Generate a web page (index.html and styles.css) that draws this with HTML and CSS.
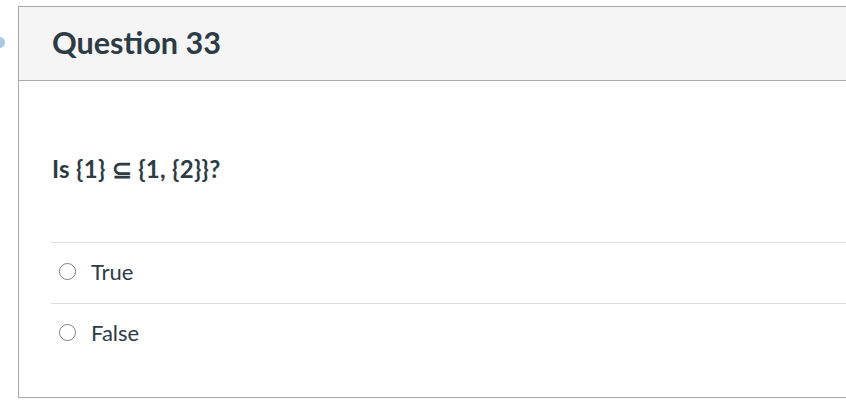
FILE: index.html
```html
<!DOCTYPE html>
<html>
<head>
<meta charset="utf-8">
<link rel="stylesheet" href="styles.css">
</head>
<body>
<div class="page">
  <span class="flag"></span>
  <div class="card">
    <div class="header">
      <h2 class="title">Question 33</h2>
    </div>
    <div class="body">
      <p class="question">Is {1} ⊆ {1, {2}}?</p>
      <div class="answers">
        <label class="answer"><span class="radio"></span><span class="label">True</span></label>
        <label class="answer"><span class="radio"></span><span class="label">False</span></label>
      </div>
    </div>
  </div>
</div>
</body>
</html>
```
FILE: styles.css
```css
html, body {
  margin: 0;
  padding: 0;
  background: #fff;
}
body {
  font-family: Lato, "Liberation Sans", sans-serif;
  color: #2d3b45;
  overflow: hidden;
}
.page {
  position: relative;
  padding: 6px 0 0 18px;
}
.flag {
  position: absolute;
  left: -6px;
  top: 37px;
  width: 11px;
  height: 11px;
  border-radius: 50%;
  background: #a9c6e2;
}
.card {
  border: 1px solid #a8a8a8;
  border-right: none;
  height: 392px;
  box-sizing: border-box;
  display: flex;
  flex-direction: column;
}
.header {
  background: #f5f5f5;
  border-bottom: 1px solid #a8a8a8;
  height: 74px;
  box-sizing: border-box;
  display: flex;
  align-items: center;
  padding-left: 33px;
}
.title {
  margin: 0;
  font-size: 30.6px;
  font-weight: 700;
  line-height: 1;
}
.body {
  padding: 0 0 0 32px;
}
.question {
  margin: 73px 0 0 1px;
  font-size: 24px;
  font-weight: 700;
  line-height: 30px;
  letter-spacing: 0.3px;
}
.answers {
  margin-top: 58px;
}
.answer {
  display: flex;
  align-items: center;
  height: 60px;
  border-top: 1px solid #dcdcdc;
  padding: 0 0 3px 8px;
  box-sizing: border-box;
  height: 61px;
}
.radio {
  width: 15px;
  height: 15px;
  border: 1.5px solid #808080;
  border-radius: 50%;
  margin-right: 15px;
  box-sizing: content-box;
}
.label {
  font-size: 22px;
  line-height: 24px;
}
```
